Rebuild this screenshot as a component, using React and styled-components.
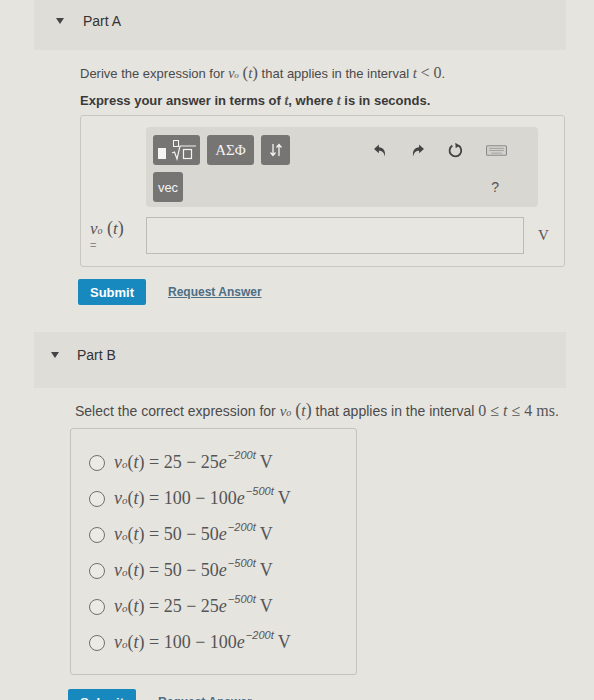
import React from "react";
import styled, { createGlobalStyle } from "styled-components";

const Global = createGlobalStyle`
  html, body {
    margin: 0;
    padding: 0;
    background: #e6e4df;
    font-family: "Liberation Sans", Arial, sans-serif;
    color: #3b3b3b;
  }
`;

const Page = styled.div`
  width: 594px;
  height: 700px;
  overflow: hidden;
`;

const PartHeader = styled.div`
  display: flex;
  align-items: center;
  box-sizing: border-box;
  gap: ${(p) => p.gap}px;
  height: ${(p) => p.h}px;
  padding-left: ${(p) => p.left}px;
  padding-bottom: ${(p) => p.pb || 0}px;
  margin-top: ${(p) => p.mt || 0}px;
  margin-right: 28px;
  margin-left: 34px;
  background: #dfddd8;
  font-size: 14px;
  color: #333;
`;

const Caret = styled.span`
  width: 0;
  height: 0;
  border-left: 4px solid transparent;
  border-right: 4px solid transparent;
  border-top: 6px solid #444;
`;

const Body = styled.div`
  padding: ${(p) => p.pad};
`;

const Prompt = styled.p`
  margin: 0 0 ${(p) => p.mb || 0}px;
  font-size: ${(p) => p.fs || 13}px;
  line-height: ${(p) => p.lh || 16}px;
  font-weight: ${(p) => (p.bold ? "bold" : "normal")};
  color: ${(p) => (p.bold ? "#3a3a3a" : "#4a4a4a")};
`;

const M = styled.span`
  font-family: "Liberation Serif", "DejaVu Serif", serif;
  font-style: ${(p) => (p.up ? "normal" : "italic")};
  font-size: ${(p) => p.size || 15}px;
  color: #555;
`;

const AnswerBox = styled.div`
  width: 485px;
  box-sizing: border-box;
  border: 1px solid #c9c7c2;
  border-radius: 3px;
  background: #e7e5e0;
  padding: 11px 0 12px 0;
  display: grid;
  grid-template-columns: 65px 378px 42px;
  row-gap: 10px;
`;

const Toolbar = styled.div`
  grid-column: 2 / 4;
  width: 392px;
  height: 80px;
  box-sizing: border-box;
  background: #d9d7d2;
  border-radius: 4px;
  padding: 8px 7px;
  display: grid;
  grid-template-columns: auto 1fr auto;
  grid-template-rows: 30px 30px;
  row-gap: 7px;
`;

const BtnRow = styled.div`
  display: flex;
  gap: 7px;
`;

const ToolBtn = styled.div`
  width: ${(p) => p.w}px;
  height: 30px;
  background: #777474;
  border-radius: 3px;
  color: #f3f3f3;
  display: flex;
  align-items: center;
  justify-content: center;
  font-size: ${(p) => p.fs || 13}px;
  font-family: ${(p) =>
    p.serif ? '"Liberation Serif", serif' : '"Liberation Sans", Arial, sans-serif'};
`;

const IconRow = styled.div`
  grid-column: 3;
  display: flex;
  align-items: center;
  gap: 22px;
  padding-right: 24px;
  color: #555;
`;

const Help = styled.div`
  grid-column: 3;
  grid-row: 2;
  align-self: center;
  justify-self: end;
  padding-right: 32px;
  font-size: 14px;
  color: #555;
`;

const Label = styled.div`
  padding-left: 9px;
  padding-top: 2px;
  line-height: 19px;
`;

const Eq = styled.div`
  font-size: 11px;
  line-height: 11px;
  color: #888;
`;

const Input = styled.div`
  height: 37px;
  border: 1px solid #bdbbb6;
  background: #e8e6e1;
  box-sizing: border-box;
`;

const Unit = styled.div`
  align-self: start;
  line-height: 37px;
  padding-left: 14px;
  font-family: "Liberation Serif", serif;
  font-size: 15px;
  color: #555;
`;

const Actions = styled.div`
  display: flex;
  align-items: center;
  gap: 22px;
  margin-top: ${(p) => p.mt}px;
  margin-left: -2px;
`;

const Submit = styled.button`
  width: 68px;
  height: 26px;
  border: none;
  border-radius: 2px;
  background: #1889be;
  color: #fff;
  font-family: "Liberation Sans", Arial, sans-serif;
  font-size: 13px;
  font-weight: bold;
  padding: 0;
`;

const LinkText = styled.a`
  font-size: 12px;
  font-weight: bold;
  color: #4c6e86;
  text-decoration: underline;
`;

const Options = styled.div`
  width: 287px;
  box-sizing: border-box;
  border: 1px solid #c4c2bd;
  border-radius: 3px;
  padding: 22px 0 20px 18px;
  display: flex;
  flex-direction: column;
  gap: 13px;
`;

const Option = styled.label`
  display: flex;
  align-items: center;
  gap: 9px;
  height: 23px;
`;

const Radio = styled.span`
  width: 16px;
  height: 16px;
  border: 1.5px solid #707070;
  border-radius: 50%;
  box-sizing: border-box;
  background: #eceae5;
  flex: none;
`;

const Sup = styled.sup`
  font-family: "Liberation Sans", Arial, sans-serif;
  font-style: italic;
  font-size: 11px;
  vertical-align: 9px;
  line-height: 0;
  margin-left: 1px;
  color: #555;
`;

const Undo = ({ flip }) => (
  <svg width="15" height="15" viewBox="0 0 14 14" style={flip ? { transform: "scaleX(-1)" } : null}>
    <path d="M5.5 1.5 L1 5.5 L5.5 9.5 V7.2 C8.4 7.2 10.2 8.6 11 12.5 C12 7 9.5 4 5.5 3.9 Z" fill="#444" />
  </svg>
);

const Reset = () => (
  <svg width="17" height="17" viewBox="0 0 16 16">
    <path d="M10.5 3.2 A5.5 5.5 0 1 1 5 3.4" fill="none" stroke="#444" strokeWidth="1.7" />
    <path d="M7.8 0.8 L11.8 3.3 L8.2 5.8 Z" fill="#444" />
  </svg>
);

const Keyboard = () => (
  <svg width="21" height="11" viewBox="0 0 20 10">
    <rect x="0.5" y="0.5" width="19" height="9" rx="1" fill="#d2d0cb" stroke="#8a8a8a" />
    <path d="M3 3h14M3 5h14M5 7.5h10" stroke="#9a9a9a" strokeWidth="0.8" />
  </svg>
);

const Radical = () => (
  <svg width="40" height="22" viewBox="0 0 40 22">
    <rect x="1" y="9" width="8" height="11" fill="#f4f4f4" />
    <rect x="16.5" y="1.5" width="5" height="6" fill="none" stroke="#f4f4f4" strokeWidth="1" />
    <path d="M15 14 L17.5 13 L20 20 L23 7 H39" fill="none" stroke="#f4f4f4" strokeWidth="1.2" />
    <rect x="26.5" y="10.5" width="8" height="9" fill="none" stroke="#f4f4f4" strokeWidth="1.2" />
  </svg>
);

const Swap = () => (
  <svg width="14" height="14" viewBox="0 0 14 14">
    <path d="M4 1 V12 M1.5 9.5 L4 12.5 L6.5 9.5 M10 13 V2 M7.5 4.5 L10 1.5 L12.5 4.5" fill="none" stroke="#f4f4f4" strokeWidth="1.3" />
  </svg>
);

const options = [
  ["25", "25", "200"],
  ["100", "100", "500"],
  ["50", "50", "200"],
  ["50", "50", "500"],
  ["25", "25", "500"],
  ["100", "100", "200"],
];

export default function App() {
  return (
    <Page>
      <Global />
      <PartHeader h={50} pb={8} gap={19} left={22}>
        <Caret />
        <span>Part A</span>
      </PartHeader>

      <Body pad="15px 0 0 80px">
        <Prompt mb={10}>
          Derive the expression for <M size={14}>v</M>
          <M size={9}>o</M> <M up size={17}>(</M>
          <M size={15}>t</M>
          <M up size={17}>)</M> that applies in the interval <M size={15}>t</M>{" "}
          <M up size={16}>&lt; 0</M>.
        </Prompt>
        <Prompt bold mb={6}>
          Express your answer in terms of <M size={14}>t</M>, where <M size={14}>t</M> is in seconds.
        </Prompt>

        <AnswerBox>
          <Toolbar>
            <BtnRow>
              <ToolBtn w={47}>
                <Radical />
              </ToolBtn>
              <ToolBtn w={47} serif fs={15}>
                ΑΣΦ
              </ToolBtn>
              <ToolBtn w={29}>
                <Swap />
              </ToolBtn>
            </BtnRow>
            <IconRow>
              <Undo />
              <Undo flip />
              <Reset />
              <Keyboard />
            </IconRow>
            <ToolBtn w={30} style={{ gridRow: 2, gridColumn: 1 }}>
              vec
            </ToolBtn>
            <Help>?</Help>
          </Toolbar>

          <Label>
            <M size={17}>v</M>
            <M size={10}>o</M> <M up size={18}>(</M>
            <M size={17}>t</M>
            <M up size={18}>)</M>
            <Eq>=</Eq>
          </Label>
          <Input />
          <Unit>V</Unit>
        </AnswerBox>

        <Actions mt={12}>
          <Submit>Submit</Submit>
          <LinkText>Request Answer</LinkText>
        </Actions>
      </Body>

      <PartHeader h={56} pb={10} gap={18} left={17} mt={27}>
        <Caret />
        <span>Part B</span>
      </PartHeader>

      <Body pad="13px 0 0 75px">
        <Prompt fs={14} lh={18} mb={6}>
          Select the correct expression for <M size={15}>v</M>
          <M size={10}>o</M> <M up size={18}>(</M>
          <M size={16}>t</M>
          <M up size={18}>)</M> that applies in the interval <M up size={16}>0 ≤ </M>
          <M size={16}>t</M>
          <M up size={16}> ≤ 4 ms</M>.
        </Prompt>
      </Body>
      <Body pad="0 0 0 70px">
        <Options>
          {options.map(([a, b, k], i) => (
            <Option key={i}>
              <Radio />
              <span>
                <M size={18}>v</M>
                <M size={11}>o</M>
                <M up size={18}>(</M>
                <M size={18}>t</M>
                <M up size={18}>) = {a} − {b}</M>
                <M size={18}>e</M>
                <Sup>−{k}t</Sup>
                <M up size={18}> V</M>
              </span>
            </Option>
          ))}
        </Options>
        <Actions mt={14}>
          <Submit>Submit</Submit>
          <LinkText>Request Answer</LinkText>
        </Actions>
      </Body>
    </Page>
  );
}
